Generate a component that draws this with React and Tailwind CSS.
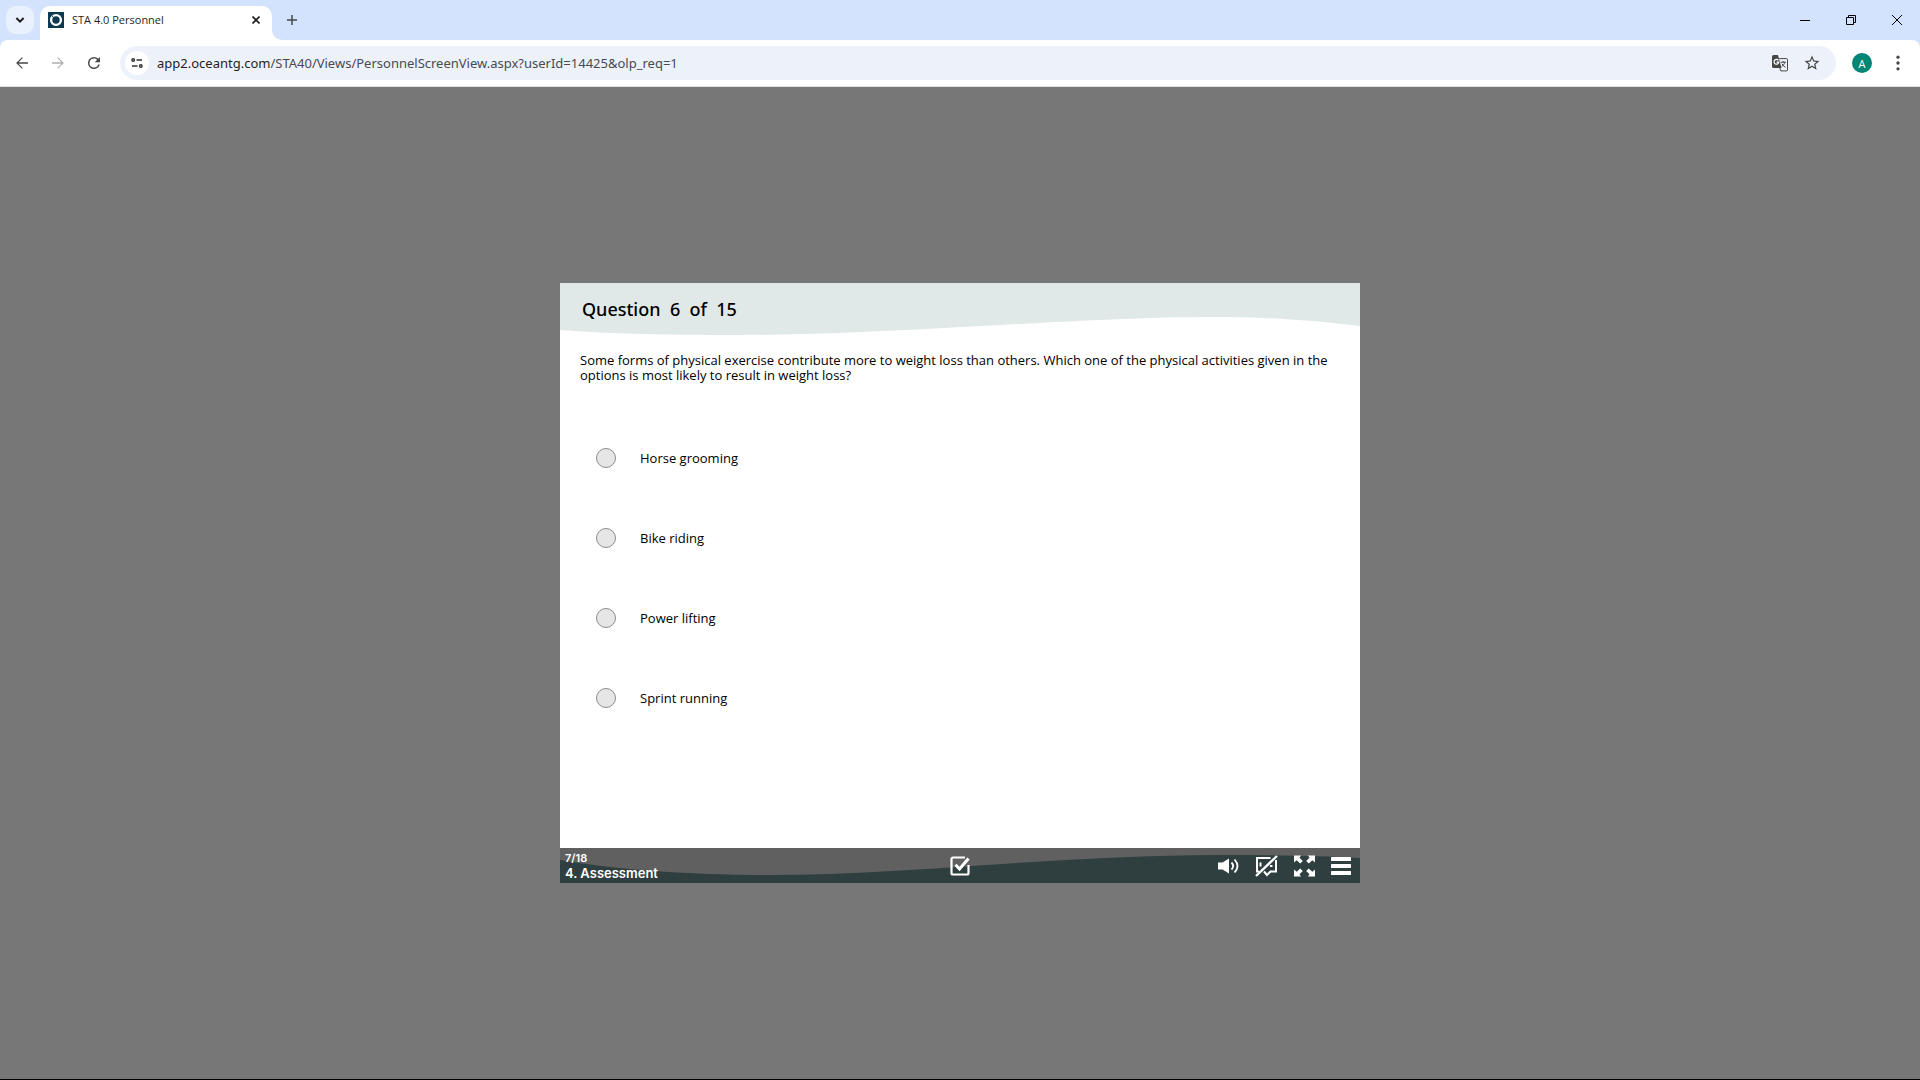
import React from "react";

const ANSWERS = ["Horse grooming", "Bike riding", "Power lifting", "Sprint running"];

function Icon({ className = "size-[18px]", children, viewBox = "0 0 24 24" }) {
  return (
    <svg className={className} viewBox={viewBox} fill="currentColor" aria-hidden="true">
      {children}
    </svg>
  );
}

function IconButton({ label, className = "", children }) {
  return (
    <button type="button" aria-label={label} className={`flex shrink-0 items-center justify-center ${className}`}>
      {children}
    </button>
  );
}

function TabStrip() {
  return (
    <div className="flex h-10 items-start bg-[#d3e3fd] pl-1.5">
      <IconButton label="Search tabs" className="mt-1.5 size-7 rounded-[10px] bg-[#e9f1fe] text-[#1f1f1f]">
        <svg className="size-2.5" viewBox="0 0 10 10" fill="none" stroke="currentColor" strokeWidth="2" aria-hidden="true">
          <path d="M1.400 3l3.600 3.600L8.600 3" />
        </svg>
      </IconButton>
      <div className="mt-1.5 ml-1.5 flex h-[34px] w-[232px] items-center rounded-t-[10px] bg-white pr-2 pb-1.5 pl-2">
        <svg className="size-4 shrink-0" viewBox="0 0 16 16" aria-hidden="true">
          <rect width="16" height="16" fill="#0d3a50" />
          <circle cx="8" cy="8" r="4.900" fill="none" stroke="#fff" strokeWidth="2.400" />
          <path d="M3.500 3.200l2 2.400" stroke="#0d3a50" strokeWidth="1" />
        </svg>
        <span className="ml-2 flex-1 text-[11px] leading-4 whitespace-nowrap text-[#1f1f1f]">STA 4.0 Personnel</span>
        <IconButton label="Close tab" className="size-4 text-[#1f1f1f]">
          <svg className="size-2" viewBox="0 0 8 8" stroke="currentColor" strokeWidth="1.600" aria-hidden="true">
            <path d="M.5.5l7 7M7.500.5l-7 7" />
          </svg>
        </IconButton>
      </div>
      <svg className="mt-[30px] size-2.5 text-white" viewBox="0 0 10 10" fill="currentColor" aria-hidden="true">
        <path d="M0 0a10 10 0 0 0 10 10H0z" />
      </svg>
      <IconButton label="New tab" className="mt-1.5 -ml-1 size-7 text-[#474747]">
        <svg className="size-2.5" viewBox="0 0 10 10" stroke="currentColor" strokeWidth="1.500" aria-hidden="true">
          <path d="M5 0v10M0 5h10" />
        </svg>
      </IconButton>
      <div className="ml-auto flex h-10 text-black">
        <IconButton label="Minimize" className="w-[46px]">
          <svg className="size-2.5" viewBox="0 0 10 10" stroke="currentColor" aria-hidden="true">
            <path d="M0 5.500h10" />
          </svg>
        </IconButton>
        <IconButton label="Restore" className="w-[46px]">
          <svg className="size-2.5" viewBox="0 0 10 10" fill="none" stroke="currentColor" aria-hidden="true">
            <path d="M.5 2.500h7v7h-7zM2.500 2.500v-2h7v7h-2" />
          </svg>
        </IconButton>
        <IconButton label="Close" className="w-[46px]">
          <svg className="size-2.5" viewBox="0 0 10 10" fill="none" stroke="currentColor" aria-hidden="true">
            <path d="M0 0l10 10M10 0L0 10" />
          </svg>
        </IconButton>
      </div>
    </div>
  );
}

function Toolbar() {
  return (
    <div className="bg-[#d3e3fd]">
      <div className="flex h-[47px] items-center rounded-t-lg border-b border-[#e0e3e8] bg-white pl-1">
        <IconButton label="Back" className="size-9 text-[#474747]">
          <Icon><path d="M20 11.100H7.500l5.600-5.700L12 4.200 4.200 12l7.800 7.800 1.100-1.200-5.600-5.700H20z" /></Icon>
        </IconButton>
        <IconButton label="Forward" className="size-9 text-[#b0b0b0]">
          <Icon><path d="M4 11.100h12.500l-5.600-5.700L12 4.200l7.800 7.800-7.800 7.800-1.100-1.200 5.600-5.700H4z" /></Icon>
        </IconButton>
        <IconButton label="Reload" className="size-9 text-[#474747]">
          <Icon><path d="M17.650 6.350A7.960 7.960 0 0 0 12 4a8 8 0 1 0 7.730 10h-2.080A6 6 0 1 1 12 6c1.660 0 3.140.69 4.220 1.780L13 11h7V4z" /></Icon>
        </IconButton>
        <div className="ml-2 flex h-[34px] min-w-0 flex-1 items-center rounded-full bg-[#edf2fa] pr-2 pl-[5px]">
          <IconButton label="View site information" className="size-6 rounded-full bg-white text-[#333]">
            <svg className="h-2.5 w-3" viewBox="0 0 12 10" fill="none" stroke="currentColor" strokeWidth="1.400" aria-hidden="true">
              <circle cx="2.200" cy="2" r="1.300" />
              <path d="M5.500 2H11M1 8h5.500" />
              <circle cx="9.800" cy="8" r="1.300" />
            </svg>
          </IconButton>
          <div className="relative ml-2 h-5 min-w-0 flex-1 font-['Noto_Sans',sans-serif] text-[13px] leading-5">
            <div className="truncate text-[#474b50]" aria-hidden="true">
              <span className="text-[#1f1f1f]">app2.oceantg.com</span>/STA40/Views/PersonnelScreenView.aspx?userId=14425&amp;olp_req=1
            </div>
            <input
              aria-label="Address and search bar"
              className="absolute inset-0 w-full bg-transparent text-transparent outline-none"
            />
          </div>
          <IconButton label="Translate this page" className="w-8 text-[#474747]">
            <svg className="h-[17px] w-4" viewBox="0 0 16 17" fill="none" aria-hidden="true">
              <path d="M0 1.500A1.500 1.500 0 0 1 1.500 0H6l3.500 13h-8A1.500 1.500 0 0 1 0 11.500z" fill="currentColor" />
              <path d="M6.400 5.400A2.400 2.400 0 1 0 6.800 7.200H4.600" stroke="#fff" strokeWidth="1.200" />
              <path d="M7.200 3.600h7.300a1 1 0 0 1 1 1v10.300a1 1 0 0 1-1 1H8.800l-1-2.800" stroke="currentColor" />
              <path d="M8.500 7.200h5.500M11.200 6v1.200M12.800 7.200c-.4 2-1.800 3.600-3.300 4.500M10 8.800c.7 1.500 2 2.800 3.500 3.500" stroke="currentColor" />
            </svg>
          </IconButton>
          <IconButton label="Bookmark this tab" className="w-8 text-[#474747]">
            <Icon><path d="M22 9.240l-7.190-.62L12 2 9.190 8.630 2 9.240l5.460 4.730L5.820 21 12 17.270 18.180 21l-1.630-7.030zM12 15.400l-3.760 2.270 1-4.280-3.320-2.880 4.380-.38L12 6.100l1.710 4.040 4.380.38-3.320 2.880 1 4.280z" /></Icon>
          </IconButton>
        </div>
        <IconButton label="Profile" className="ml-2 w-9">
          <span className="flex size-5 items-center justify-center rounded-full bg-[#018574] text-[11px] leading-none text-white">A</span>
        </IconButton>
        <IconButton label="Menu" className="mr-1 w-9 text-[#474747]">
          <Icon className="size-5"><circle cx="12" cy="5" r="2" /><circle cx="12" cy="12" r="2" /><circle cx="12" cy="19" r="2" /></Icon>
        </IconButton>
      </div>
    </div>
  );
}

function QuestionHeader() {
  return (
    <header className="relative h-[60px]">
      <svg className="absolute inset-0 size-full" viewBox="0 0 800 60" preserveAspectRatio="none" aria-hidden="true">
        <path d="M0 0H800V43C740 36 700 34 650 34C520 34 330 52 180 52C110 52 50 51 0 47Z" fill="#e1e9e8" />
      </svg>
      <h1 className="relative pt-3.5 pl-[22px] font-['Noto_Sans',sans-serif] text-[18px] leading-6 font-medium whitespace-pre text-black">
        {"Question  6  of  15"}
      </h1>
    </header>
  );
}

function PlayerBar() {
  return (
    <footer className="relative grid h-[35px] grid-cols-[1fr_auto_1fr] items-center bg-[#606060] text-white">
      <svg className="absolute inset-0 size-full" viewBox="0 0 800 35" preserveAspectRatio="none" aria-hidden="true">
        <path d="M0 12C60 22 130 27 210 27C350 27 500 7 660 7C710 7 760 8 800 10V35H0Z" fill="#2f3e3f" />
      </svg>
      <div className="relative pl-[5px] font-['Inter',sans-serif] font-semibold">
        <div className="text-[11px] leading-[15px]">7/18</div>
        <div className="text-[13px] leading-[15px]">4. Assessment</div>
      </div>
      <IconButton label="Submit answer" className="relative">
        <svg className="size-5" viewBox="0 0 20 20" fill="none" stroke="currentColor" aria-hidden="true">
          <path d="M15 1.500H3A1.500 1.500 0 0 0 1.500 3v14A1.500 1.500 0 0 0 3 18.500h14a1.500 1.500 0 0 0 1.500-1.500V9" strokeWidth="2.200" />
          <path d="M5.500 8.800l4 4.200L18.500 2.500" strokeWidth="3" />
        </svg>
      </IconButton>
      <div className="relative flex items-center justify-end gap-4 pr-[9px]">
        <IconButton label="Volume">
          <svg className="h-[22px] w-[21px]" viewBox="0 0 21 22" fill="currentColor" aria-hidden="true">
            <path d="M0 7.500h4.500L11 3.500v15l-6.500-4H0z" />
            <path d="M13.500 7.500q3.400 3.500 0 7M16.500 4.500q6 6.500 0 13" fill="none" stroke="currentColor" strokeWidth="1.800" />
          </svg>
        </IconButton>
        <IconButton label="Captions off">
          <svg className="h-[22px] w-[23px]" viewBox="0 0 23 22" fill="none" stroke="currentColor" strokeWidth="2" aria-hidden="true">
            <path d="M15.500 3H2v13.500h2M21 5v11.500h-5.500l-3.500 3.500-3-3.500M5.500 7.500v4" />
            <path d="M15 11h2.500" />
            <path d="M1 21L22 1" strokeWidth="2.400" />
          </svg>
        </IconButton>
        <IconButton label="Full screen">
          <svg className="h-[22px] w-[21px]" viewBox="0 0 21 22" fill="currentColor" aria-hidden="true">
            <path d="M0 .5h7L5.500 2.700l3.300 3.300-2.600 2.600-3.500-3.400L0 7.500zM21 .5h-7l1.500 2.200L12.200 6l2.600 2.600 3.500-3.400L21 7.500zM0 21.500h7l-1.500-2.200L8.800 16l-2.600-2.600-3.500 3.400L0 14.500zM21 21.500h-7l1.500-2.200-3.300-3.300 2.600-2.600 3.500 3.400 2.700-2.300z" />
          </svg>
        </IconButton>
        <IconButton label="Contents">
          <svg className="h-[18px] w-5" viewBox="0 0 20 18" fill="currentColor" aria-hidden="true">
            <path d="M1 0h18a1 1 0 0 1 0 4H1a1 1 0 0 1 0-4zM1 7h18a1 1 0 0 1 0 4H1a1 1 0 0 1 0-4zM1 14h18a1 1 0 0 1 0 4H1a1 1 0 0 1 0-4z" />
          </svg>
        </IconButton>
      </div>
    </footer>
  );
}

export default function App() {
  return (
    <div className="flex min-h-screen flex-col border-b border-black bg-[#777] font-['Open_Sans','Noto_Sans',sans-serif]">
      <TabStrip />
      <Toolbar />
      <main className="flex flex-1 items-center justify-center">
        <section className="flex min-h-[600px] w-full max-w-[800px] flex-col bg-white">
          <QuestionHeader />
          <fieldset className="flex-1 text-[13px] leading-[15px] text-black">
            <legend className="px-5 pt-2.5">
              Some forms of physical exercise contribute more to weight loss than others. Which one of the physical activities given in the options is most likely to result in weight loss?
            </legend>
            <div className="mt-[65px] flex flex-col gap-[60px] pl-9">
              {ANSWERS.map((answer) => (
                <label key={answer} className="flex h-5 items-center gap-6">
                  <input
                    type="radio"
                    name="answer"
                    className="size-5 appearance-none rounded-full border border-[#8c8c8c] bg-[#e6e6e6] checked:bg-[#2f3e3f]"
                  />
                  {answer}
                </label>
              ))}
            </div>
          </fieldset>
          <PlayerBar />
        </section>
      </main>
    </div>
  );
}
